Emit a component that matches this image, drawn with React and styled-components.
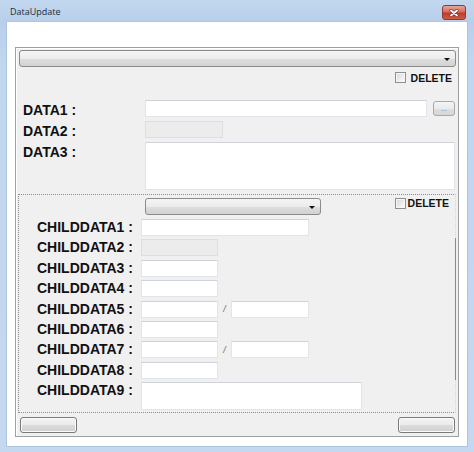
import React from "react";
import styled, { createGlobalStyle } from "styled-components";

const GlobalStyle = createGlobalStyle`
  html, body {
    margin: 0;
    padding: 0;
    background: #c2d6ee;
  }
  body {
    font-family: "Liberation Sans", Arial, sans-serif;
  }
`;

const Window = styled.div`
  width: 474px;
  height: 452px;
  box-sizing: border-box;
  display: flex;
  flex-direction: column;
  background: linear-gradient(180deg, #c3d7ef 0%, #b8cfeb 22px, #c1d6ef 60px, #c4d8f0 100%);
`;

const TitleBar = styled.div`
  height: 22px;
  flex: none;
  display: flex;
  justify-content: space-between;
  padding: 0 8px 0 10px;
`;

const Title = styled.div`
  font-family: "Open Sans", "Noto Sans", sans-serif;
  font-size: 9px;
  line-height: 22px;
  color: #1c2a3a;
  padding-top: 1px;
`;

const CloseButton = styled.div`
  width: 24px;
  height: 15px;
  margin-top: 5px;
  box-sizing: border-box;
  border: 1px solid #8a3a32;
  border-radius: 3px;
  background: linear-gradient(180deg, #e6a89e 0%, #d66a5b 45%, #c23a26 55%, #d05a45 100%);
  display: flex;
  align-items: center;
  justify-content: center;
`;

const Client = styled.div`
  flex: 1;
  margin: 0 7px 6px 7px;
  background: #ffffff;
  box-shadow: 0 0 0 1px #aec4df;
  padding: 25px 8px 9px 8px;
  display: flex;
  flex-direction: column;
`;

const Panel = styled.div`
  flex: 1;
  display: flex;
  flex-direction: column;
  background: #f0f0f0;
  border: 1px solid #a0a0a0;
  box-shadow: inset 1px 1px 0 #ffffff;
  padding: 2px 2px 3px 3px;
`;

const Combo = styled.div`
  box-sizing: border-box;
  height: 17px;
  width: ${(p) => (p.$width ? `${p.$width}px` : "auto")};
  margin-left: ${(p) => p.$offset ?? 0}px;
  border: 1px solid #8b8b8b;
  border-radius: 3px;
  background: linear-gradient(180deg, #f4f4f4 0%, #ececec 50%, #dedede 51%, #d2d2d2 100%);
  display: flex;
  align-items: center;
  justify-content: flex-end;
  padding-right: 5px;
`;

const Arrow = styled.span`
  width: 0;
  height: 0;
  border-left: 3px solid transparent;
  border-right: 3px solid transparent;
  border-top: 3px solid #111;
  margin-top: 1px;
`;

const DeleteRow = styled.div`
  margin-top: 4px;
  height: 13px;
  display: flex;
  justify-content: flex-end;
  align-items: center;
  padding-right: 4px;
`;

const CheckGroup = styled.label`
  display: flex;
  align-items: center;
  gap: ${(p) => p.$gap ?? 5}px;
  align-self: ${(p) => (p.$top ? "flex-start" : "center")};
  margin-top: ${(p) => (p.$top ? "-1px" : "0")};
`;

const CheckBox = styled.span`
  width: 11px;
  height: 11px;
  box-sizing: border-box;
  border: 1px solid #8e8f8f;
  background: linear-gradient(135deg, #d6d6d6 0%, #f2f2f2 70%, #fbfbfb 100%);
  box-shadow: inset 0 0 0 1px #f6f6f6;
`;

const CheckText = styled.span`
  font-size: 10.5px;
  font-weight: bold;
  color: #111;
  line-height: 12px;
`;

const DataGrid = styled.div`
  margin-top: 16px;
  display: grid;
  grid-template-columns: 122px 1fr;
  grid-template-rows: 17px 17px 48px;
  row-gap: 4px;
  padding-left: 4px;
  padding-right: 1px;
`;

const Label = styled.div`
  font-size: 14px;
  font-weight: bold;
  color: #111111;
  line-height: 17px;
  white-space: nowrap;
  padding-top: ${(p) => p.$drop ?? 0}px;
`;

const FieldRow = styled.div`
  display: flex;
  align-items: center;
  gap: ${(p) => p.$gap ?? 6}px;
`;

const TextBox = styled.input`
  box-sizing: border-box;
  display: block;
  margin: 0;
  padding: 0;
  outline: none;
  height: ${(p) => p.$height ?? 17}px;
  width: ${(p) => (p.$width ? `${p.$width}px` : "100%")};
  flex: ${(p) => (p.$width ? "none" : "1")};
  border: 1px solid #e1e4ea;
  border-top-color: #cfd2d8;
  background: ${(p) => (p.disabled ? "#ececec" : "#ffffff")};
  ${(p) => p.disabled && "border-color: #dedede;"}
`;

const TextArea = styled.textarea`
  box-sizing: border-box;
  display: block;
  margin: 0;
  padding: 0;
  outline: none;
  resize: none;
  height: ${(p) => p.$height}px;
  width: ${(p) => (p.$width ? `${p.$width}px` : "100%")};
  border: 1px solid #e1e4ea;
  border-top-color: #cfd2d8;
  background: #ffffff;
`;

const BrowseButton = styled.div`
  width: 22px;
  height: 15px;
  box-sizing: border-box;
  flex: none;
  border: 1px solid #a9a9a9;
  border-radius: 3px;
  background: linear-gradient(180deg, #f4f4f4 0%, #ebebeb 50%, #dedede 51%, #d6d6d6 100%);
  font-size: 7px;
  color: #777;
  text-align: center;
  line-height: 14px;
`;

const ChildPanel = styled.div`
  position: relative;
  margin: 4px 0 0 -1px;
  height: 219px;
  box-sizing: border-box;
  border: 1px dotted #8d8d8d;
  border-right-color: #d6d6d6;
  display: flex;
  flex-direction: column;
  padding: 3px 0 2px 0;

  &::after {
    content: "";
    position: absolute;
    right: -1px;
    top: 43px;
    bottom: 32px;
    width: 1px;
    background: #8a8a8a;
  }
`;

const ChildHeader = styled.div`
  height: 17px;
  display: flex;
  justify-content: space-between;
  padding-right: 6px;
`;

const ChildGrid = styled.div`
  margin-top: 4px;
  display: grid;
  grid-template-columns: 104px 1fr;
  grid-auto-rows: 17px;
  row-gap: 3.4px;
  padding-left: 18px;
`;

const Slash = styled.span`
  width: 13px;
  text-align: center;
  font-size: 9px;
  color: #666;
  font-style: italic;
`;

const ButtonRow = styled.div`
  margin-top: 4px;
  display: flex;
  justify-content: space-between;
  padding: 0 1px;
`;

const PushButton = styled.div`
  width: 57px;
  height: 16px;
  box-sizing: border-box;
  border: 1px solid #7a7a7a;
  border-radius: 3px;
  background: linear-gradient(180deg, #f3f3f3 0%, #ebebeb 50%, #dcdcdc 51%, #cfcfcf 100%);
  box-shadow: inset 0 0 0 1px #fbfbfb;
`;

const childRows = [
  { label: "CHILDDATA1 :", fields: [{ width: 168 }] },
  { label: "CHILDDATA2 :", fields: [{ width: 77, disabled: true }] },
  { label: "CHILDDATA3 :", fields: [{ width: 77 }] },
  { label: "CHILDDATA4 :", fields: [{ width: 77 }] },
  { label: "CHILDDATA5 :", fields: [{ width: 77 }, { width: 78 }] },
  { label: "CHILDDATA6 :", fields: [{ width: 77 }] },
  { label: "CHILDDATA7 :", fields: [{ width: 77 }, { width: 78 }] },
  { label: "CHILDDATA8 :", fields: [{ width: 77 }] },
];

const Delete = ({ top, gap }) => (
  <CheckGroup $top={top} $gap={gap}>
    <CheckBox />
    <CheckText>DELETE</CheckText>
  </CheckGroup>
);

export default function App() {
  return (
    <>
      <GlobalStyle />
      <Window>
        <TitleBar>
          <Title>DataUpdate</Title>
          <CloseButton>
            <svg width="10" height="8" viewBox="0 0 10 8">
              <path d="M2 1.5 L8 6.5 M8 1.5 L2 6.5" stroke="#7a2a22" strokeWidth="3" strokeLinecap="round" />
              <path d="M2 1.5 L8 6.5 M8 1.5 L2 6.5" stroke="#ffffff" strokeWidth="1.8" strokeLinecap="round" />
            </svg>
          </CloseButton>
        </TitleBar>
        <Client>
          <Panel>
            <Combo>
              <Arrow />
            </Combo>
            <DeleteRow>
              <Delete />
            </DeleteRow>
            <DataGrid>
              <Label $drop={2}>DATA1 :</Label>
              <FieldRow>
                <TextBox readOnly />
                <BrowseButton>...</BrowseButton>
              </FieldRow>
              <Label $drop={2}>DATA2 :</Label>
              <FieldRow>
                <TextBox disabled $width={78} />
              </FieldRow>
              <Label $drop={2}>DATA3 :</Label>
              <TextArea readOnly $height={48} />
            </DataGrid>
            <ChildPanel>
              <ChildHeader>
                <Combo $offset={126} $width={176}>
                  <Arrow />
                </Combo>
                <Delete top gap={2} />
              </ChildHeader>
              <ChildGrid>
                {childRows.map((row) => (
                  <React.Fragment key={row.label}>
                    <Label>{row.label}</Label>
                    <FieldRow $gap={0}>
                      {row.fields.map((f, i) => (
                        <React.Fragment key={i}>
                          {i > 0 && <Slash>/</Slash>}
                          <TextBox readOnly={!f.disabled} disabled={f.disabled} $width={f.width} />
                        </React.Fragment>
                      ))}
                    </FieldRow>
                  </React.Fragment>
                ))}
                <Label>CHILDDATA9 :</Label>
                <TextArea readOnly $height={28} $width={221} />
              </ChildGrid>
            </ChildPanel>
            <ButtonRow>
              <PushButton />
              <PushButton />
            </ButtonRow>
          </Panel>
        </Client>
      </Window>
    </>
  );
}
